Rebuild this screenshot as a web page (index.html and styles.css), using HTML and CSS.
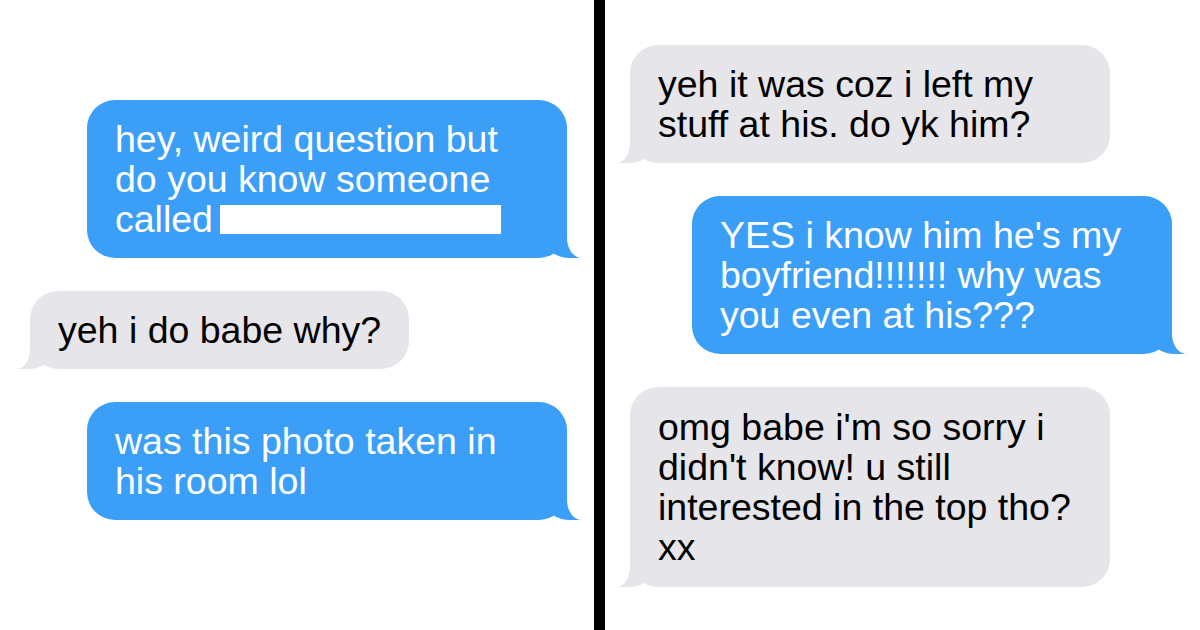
FILE: index.html
```html
<!DOCTYPE html>
<html lang="en">
<head>
  <meta charset="UTF-8">
  <meta name="viewport" content="width=device-width, initial-scale=1.0">
  <title>Chat</title>
  <link rel="stylesheet" href="styles.css">
</head>
<body>
<div class="page">
  <div class="chat chat-left">
    <div class="bubble sent">hey, weird question but do you know someone called <span class="redacted"></span></div>
    <div class="bubble received short">yeh i do babe why?</div>
    <div class="bubble sent">was this photo taken in his room lol</div>
  </div>

  <div class="divider"></div>

  <div class="chat chat-right">
    <div class="bubble received">yeh it was coz i left my stuff at his. do yk him?</div>
    <div class="bubble sent">YES i know him he's my boyfriend!!!!!!! why was you even at his???</div>
    <div class="bubble received tall">omg babe i'm so sorry i didn't know! u still interested in the top tho? xx</div>
  </div>
</div>
</body>
</html>
```

FILE: styles.css
```css
/* Reset */
* {
  margin: 0;
  padding: 0;
  box-sizing: border-box;
}

body {
  font-family: 'Liberation Sans', Arial, sans-serif;
  background: #fff;
  width: 1200px;
  height: 630px;
  overflow: hidden;
}

/* Due colonne separate da una barra nera */
.page {
  display: grid;
  grid-template-columns: 594px 11px 595px;
  height: 630px;
}

.divider {
  background: #000;
}

.chat {
  display: flex;
  flex-direction: column;
  gap: 33px;
}

.chat-left {
  padding-top: 100px;
}

.chat-right {
  padding-top: 45px;
}

/* Bolla del messaggio */
.bubble {
  position: relative;
  z-index: 0;
  width: 480px;
  padding: 19px 28px;
  border-radius: 28px;
  font-size: 37.5px;
  line-height: 40px;
}

.bubble.short {
  width: auto;
  align-self: flex-start;
}

.bubble.tall {
  padding-top: 20px;
  padding-bottom: 20px;
}

.bubble::before,
.bubble::after {
  content: '';
  position: absolute;
  z-index: -1;
  bottom: 0;
  height: 32px;
}

/* Inviati (blu, coda a destra) */
.bubble.sent {
  background: #3b9ff8;
  color: #fff;
}

.chat-left .sent {
  align-self: flex-end;
  margin-right: 27px;
}

.chat-right .sent {
  margin-left: 87px;
}

.bubble.sent::before {
  right: -15px;
  width: 36px;
  background: #3b9ff8;
  border-bottom-left-radius: 24px 17px;
}

.bubble.sent::after {
  right: -27px;
  width: 27px;
  background: #fff;
  border-bottom-left-radius: 15px 20px;
}

/* Ricevuti (grigio, coda a sinistra) */
.bubble.received {
  background: #e5e5ea;
  color: #000;
}

.chat-left .received {
  margin-left: 30px;
}

.chat-right .received {
  margin-left: 25px;
}

.bubble.received::before {
  left: -14px;
  width: 36px;
  background: #e5e5ea;
  border-bottom-right-radius: 24px 17px;
}

.bubble.received::after {
  left: -24px;
  width: 24px;
  background: #fff;
  border-bottom-right-radius: 14px 20px;
}

/* Nome coperto */
.redacted {
  display: inline-block;
  width: 281px;
  height: 29px;
  margin-left: -3px;
  background: #fff;
  vertical-align: -2px;
}
```
